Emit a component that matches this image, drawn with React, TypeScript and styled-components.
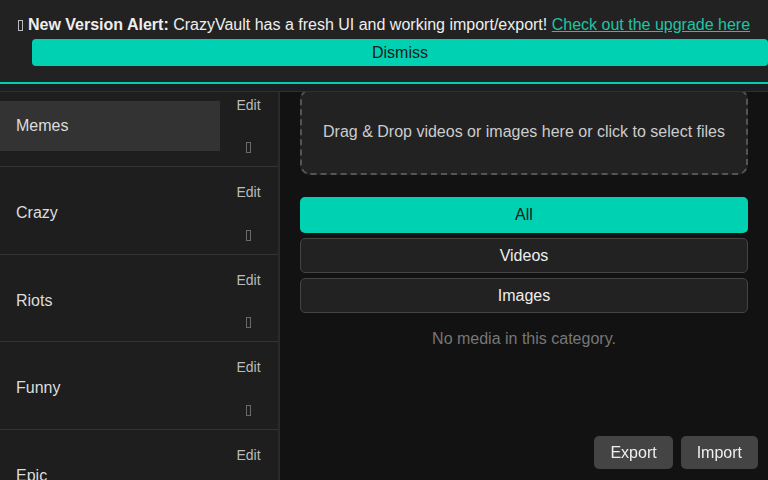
import React from 'react'
import styled, { createGlobalStyle } from 'styled-components'

const GlobalStyle = createGlobalStyle`
	html, body {
		margin: 0;
		padding: 0;
		height: 100%;
		background: #121212;
		font-family: 'Liberation Sans', Arial, sans-serif;
		color: #eee;
		overflow: hidden;
	}
	#root {
		height: 100%;
	}
`

const Page = styled.div`
	display: flex;
	flex-direction: column;
	height: 100vh;
	overflow: hidden;
`

const Banner = styled.div`
	flex: 0 0 auto;
	padding: 15px 16px 16px;
	background: #222;
	border-bottom: 2px solid #00d1b2;
	text-align: center;
	font-size: 16px;
	line-height: 20px;
	color: #eee;
	white-space: nowrap;
`

// missing-glyph box, as the emoji shows without an emoji font
const Tofu = styled.span<{ tone?: string }>`
	display: inline-block;
	box-sizing: border-box;
	width: 5px;
	height: 11px;
	border: 1px solid ${(p) => p.tone || '#bbb'};
	vertical-align: -1px;
`

const AlertIcon = styled(Tofu)`
	margin-right: 5px;
`

const Link = styled.a`
	color: #1fc4a4;
	text-decoration: underline;
	cursor: pointer;
`

const DismissButton = styled.button`
	display: block;
	width: 100%;
	margin: 4px 0 0 16px;
	padding: 4px 0;
	border: none;
	border-radius: 4px;
	background: #00d1b2;
	color: #1a1a1a;
	font-family: inherit;
	font-size: 16px;
	line-height: 19px;
	cursor: pointer;
`

const HeaderStrip = styled.div`
	flex: 0 0 auto;
	height: 7px;
	background: #1c1f21;
	border-bottom: 1px solid #2c3134;
`

const Body = styled.div`
	flex: 1 1 auto;
	display: flex;
	min-height: 0;
	overflow: hidden;
`

const Sidebar = styled.aside`
	flex: 0 0 278px;
	background: #1e1e1e;
	border-right: 2px solid #2a2a2a;
	overflow: hidden;
`

const CategoryList = styled.ul`
	list-style: none;
	margin: -12.5px 0 0;
	padding: 0;
`

const CategoryRow = styled.li`
	display: flex;
	height: 86.5px;
	border-bottom: 1px solid #333;
`

const CategoryName = styled.div<{ selected?: boolean }>`
	flex: 0 0 220px;
	align-self: center;
	box-sizing: border-box;
	height: 50px;
	margin-top: 6px;
	padding: 0 16px;
	display: flex;
	align-items: center;
	font-size: 16px;
	color: #ddd;
	background: ${(p) => (p.selected ? '#333' : 'transparent')};
`

const RowActions = styled.div`
	flex: 1 1 auto;
	display: flex;
	flex-direction: column;
	align-items: center;
	padding: 13px 1px 0 0;
	gap: 19px;
`

const EditButton = styled.button`
	height: 24px;
	padding: 0;
	border: none;
	background: none;
	color: #bbb;
	font-family: inherit;
	font-size: 14px;
	cursor: pointer;
`

const DeleteButton = styled(EditButton)`
	display: flex;
	align-items: center;
	justify-content: center;
`

const Main = styled.main`
	flex: 1 1 auto;
	padding: 0 20px;
	background: #121212;
	overflow: hidden;
`

const DropZone = styled.div`
	margin-top: -3px;
	height: 86px;
	box-sizing: border-box;
	display: flex;
	align-items: center;
	justify-content: center;
	border: 2px dashed #555;
	border-radius: 10px;
	background: #222;
	color: #ccc;
	font-size: 16px;
`

const Tabs = styled.div`
	display: flex;
	flex-direction: column;
	gap: 5px;
	margin-top: 22px;
`

const TabButton = styled.button<{ active?: boolean }>`
	height: ${(p) => (p.active ? '36px' : '35px')};
	border: ${(p) => (p.active ? 'none' : '1px solid #444')};
	border-radius: 5px;
	background: ${(p) => (p.active ? '#00d1b2' : '#222')};
	color: ${(p) => (p.active ? '#1a1a1a' : '#eee')};
	font-family: inherit;
	font-size: 16px;
	cursor: pointer;
`

const EmptyNote = styled.p`
	margin: 17px 0 0;
	text-align: center;
	color: #777;
	font-size: 16px;
`

const FloatingActions = styled.div`
	position: fixed;
	right: 10px;
	bottom: 11px;
	display: flex;
	gap: 8px;
`

const ActionButton = styled.button`
	height: 33px;
	padding: 0 16px;
	border: none;
	border-radius: 5px;
	background: #444;
	color: #eee;
	font-family: inherit;
	font-size: 16px;
	cursor: pointer;
`

const categories = ['Memes', 'Crazy', 'Riots', 'Funny', 'Epic']

const App = () => (
	<Page>
		<GlobalStyle />
		<Banner>
			<AlertIcon />
			<strong>New Version Alert:</strong> CrazyVault has a fresh UI and
			working import/export! <Link>Check out the upgrade here</Link>
			<DismissButton>Dismiss</DismissButton>
		</Banner>
		<HeaderStrip />
		<Body>
			<Sidebar>
				<CategoryList>
					{categories.map((name, i) => (
						<CategoryRow key={name}>
							<CategoryName selected={i === 0}>{name}</CategoryName>
							<RowActions>
								<EditButton>Edit</EditButton>
								<DeleteButton aria-label="Delete">
									<Tofu tone="#6a6a6a" />
								</DeleteButton>
							</RowActions>
						</CategoryRow>
					))}
				</CategoryList>
			</Sidebar>
			<Main>
				<DropZone>
					Drag &amp; Drop videos or images here or click to select files
				</DropZone>
				<Tabs>
					<TabButton active>All</TabButton>
					<TabButton>Videos</TabButton>
					<TabButton>Images</TabButton>
				</Tabs>
				<EmptyNote>No media in this category.</EmptyNote>
			</Main>
		</Body>
		<FloatingActions>
			<ActionButton>Export</ActionButton>
			<ActionButton>Import</ActionButton>
		</FloatingActions>
	</Page>
)

export default App
